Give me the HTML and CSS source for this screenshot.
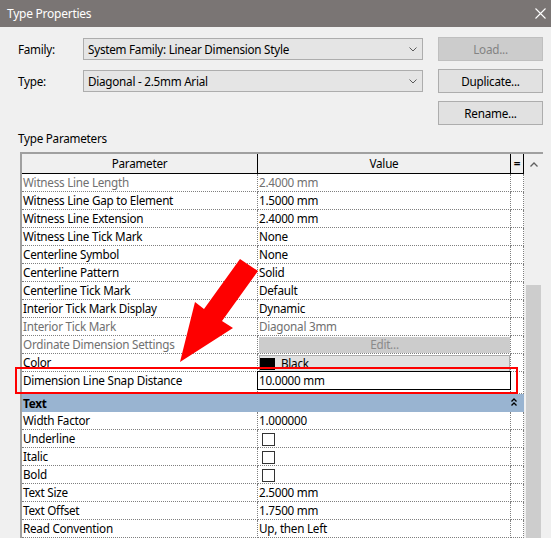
FILE: index.html
```html
<!DOCTYPE html>
<html>
<head>
<meta charset="utf-8">
<link rel="stylesheet" href="styles.css">
</head>
<body>
<div class="titlebar">
  <span class="title">Type Properties</span>
  <svg class="close" width="11" height="11" viewBox="0 0 11 11"><path d="M0.5 0.5 L10.5 10.5 M10.5 0.5 L0.5 10.5" stroke="#fff" stroke-width="1.1" fill="none"/></svg>
</div>

<div class="form">
  <span class="lbl">Family:</span>
  <div class="combo"><span>System Family: Linear Dimension Style</span><svg class="chev" width="8" height="5" viewBox="0 0 8 5"><polyline points="0.5,0.5 4,4 7.5,0.5" fill="none" stroke="#5a5a5a" stroke-width="1"/></svg></div>
  <div class="btn disabled">Load...</div>

  <span class="lbl">Type:</span>
  <div class="combo"><span>Diagonal - 2.5mm Arial</span><svg class="chev" width="8" height="5" viewBox="0 0 8 5"><polyline points="0.5,0.5 4,4 7.5,0.5" fill="none" stroke="#5a5a5a" stroke-width="1"/></svg></div>
  <div class="btn">Duplicate...</div>

  <div class="btn rename">Rename...</div>
</div>

<div class="section-label">Type Parameters</div>

<div class="frame">
  <div class="pgrid">
    <div class="c hd">Parameter</div>
    <div class="c hd">Value</div>
    <div class="c hd eqh">=</div>

    <div class="c gray">Witness Line Length</div><div class="c gray">2.4000 mm</div><div class="c"></div>
    <div class="c">Witness Line Gap to Element</div><div class="c">1.5000 mm</div><div class="c"></div>
    <div class="c">Witness Line Extension</div><div class="c">2.4000 mm</div><div class="c"></div>
    <div class="c">Witness Line Tick Mark</div><div class="c">None</div><div class="c"></div>
    <div class="c">Centerline Symbol</div><div class="c">None</div><div class="c"></div>
    <div class="c">Centerline Pattern</div><div class="c">Solid</div><div class="c"></div>
    <div class="c">Centerline Tick Mark</div><div class="c">Default</div><div class="c"></div>
    <div class="c">Interior Tick Mark Display</div><div class="c">Dynamic</div><div class="c"></div>
    <div class="c gray">Interior Tick Mark</div><div class="c gray">Diagonal 3mm</div><div class="c"></div>
    <div class="c gray">Ordinate Dimension Settings</div><div class="c"><div class="editbtn">Edit...</div></div><div class="c"></div>
    <div class="c">Color</div><div class="c"><div class="colorbtn"><span class="swatch"></span><span>Black</span></div></div><div class="c"></div>
    <div class="c tall">Dimension Line Snap Distance</div><div class="c tall"><div class="editbox">10.0000 mm</div></div><div class="c tall"></div>

    <div class="band"><span>Text</span><svg width="6" height="8" viewBox="0 0 6 8"><polyline points="0.5,3.5 3,1 5.5,3.5" fill="none" stroke="#000" stroke-width="1.3"/><polyline points="0.5,7.5 3,5 5.5,7.5" fill="none" stroke="#000" stroke-width="1.3"/></svg></div>

    <div class="c">Width Factor</div><div class="c">1.000000</div><div class="c"></div>
    <div class="c">Underline</div><div class="c"><span class="cb"></span></div><div class="c"></div>
    <div class="c">Italic</div><div class="c"><span class="cb"></span></div><div class="c"></div>
    <div class="c">Bold</div><div class="c"><span class="cb"></span></div><div class="c"></div>
    <div class="c">Text Size</div><div class="c">2.5000 mm</div><div class="c"></div>
    <div class="c">Text Offset</div><div class="c">1.7500 mm</div><div class="c"></div>
    <div class="c">Read Convention</div><div class="c">Up, then Left</div><div class="c"></div>
  </div>
  <div class="vscroll">
    <div class="sb-up"><svg width="8" height="5" viewBox="0 0 8 5"><polyline points="0.5,4.5 4,1 7.5,4.5" fill="none" stroke="#606060" stroke-width="1.3"/></svg></div>
    <div class="sb-track"><div class="sb-thumb"></div></div>
  </div>
</div>

<div class="annot-box"></div>
<svg class="annot-arrow" width="551" height="538" viewBox="0 0 551 538">
  <polygon points="240,259 258,271 222,321 233,328 180,362 195,302 204,309" fill="#fe0000"/>
</svg>
</body>
</html>
```

FILE: styles.css
```css
* { box-sizing: border-box; }
html, body {
  margin: 0;
  padding: 0;
}
body {
  width: 551px;
  height: 538px;
  overflow: hidden;
  position: relative;
  background: #f0f0f0;
  font-family: "Noto Sans", "DejaVu Sans", sans-serif;
  font-size: 11.7px;
  letter-spacing: -0.25px;
  color: #000;
}

.titlebar {
  height: 27px;
  background: #7a7574;
  color: #fff;
  display: flex;
  align-items: center;
  justify-content: space-between;
  padding: 0 5px 0 7px;
}
.title { font-size: 12px; }

.form {
  margin-top: 10px;
  padding-left: 18px;
  display: grid;
  grid-template-columns: 50px 340px 105px;
  grid-template-rows: 24px 24px 24px;
  column-gap: 15px;
  row-gap: 8px;
  align-items: center;
}
.lbl { line-height: 16px; }
.combo {
  height: 22px;
  border: 1px solid #adadad;
  background: #e5e5e5;
  display: flex;
  align-items: center;
  justify-content: space-between;
  padding: 0 5px 0 4px;
}
.btn {
  height: 24px;
  border: 1px solid #adadad;
  background: #e1e1e1;
  display: flex;
  align-items: center;
  justify-content: center;
}
.btn.disabled {
  background: #cccccc;
  border-color: #bfbfbf;
  color: #838383;
}
.rename { grid-column: 3; }

.section-label {
  margin-top: 6px;
  padding-left: 18px;
  line-height: 14px;
}

.frame {
  margin-top: 7px;
  margin-left: 20px;
  width: 523px;
  height: 386px;
  border-top: 2px solid #a0a0a0;
  border-left: 2px solid #a0a0a0;
  display: flex;
}
.pgrid {
  width: 502px;
  display: grid;
  grid-template-columns: 236px 253px 13px;
  align-content: start;
  background: #fff;
}
.c {
  height: 18px;
  line-height: 17px;
  padding-left: 1px;
  border-right: 1px dotted #7f7f7f;
  border-bottom: 1px dotted #7f7f7f;
  white-space: nowrap;
}
.c.tall { height: 22px; }
.c.gray { color: #707070; }
.hd {
  height: 20px;
  line-height: 19px;
  background: #f0f0f0;
  text-align: center;
  border-right: 1px solid #000;
  border-bottom: 1px solid #000;
  padding-left: 0;
}
.eqh { font-weight: bold; }

.editbtn {
  margin: 1px 0 0 0;
  width: 251px;
  height: 16px;
  line-height: 15px;
  background: #cccccc;
  color: #8a8a8a;
  text-align: center;
}
.colorbtn {
  margin-top: 1px;
  width: 251px;
  height: 17px;
  background: #e1e1e1;
  border: 1px solid #adadad;
  display: flex;
  align-items: center;
  line-height: 15px;
}
.swatch {
  width: 15px;
  height: 12px;
  background: #000;
  margin: 0 6px 0 0;
}
.editbox {
  margin: -1px 0 0 -2px;
  width: 254px;
  height: 19px;
  line-height: 17px;
  border: 1px solid #000;
  background: #fff;
  padding-left: 1px;
}
.cb {
  display: block;
  margin: 3px 0 0 3px;
  width: 13px;
  height: 13px;
  border: 1px solid #333;
  background: #fff;
}

.band {
  grid-column: 1 / -1;
  height: 18px;
  background: #99b4d1;
  font-weight: bold;
  display: flex;
  align-items: center;
  justify-content: space-between;
  padding: 0 7px 0 1px;
}
.band svg { margin-top: -3px; }

.vscroll {
  flex: 1;
  display: flex;
  flex-direction: column;
  background: #f0f0f0;
}
.sb-up {
  height: 20px;
  display: flex;
  align-items: center;
  justify-content: center;
  padding-left: 1px;
}
.sb-track {
  flex: 1;
  display: flex;
  flex-direction: column;
  padding: 111px 2px 0 2px;
}
.sb-thumb {
  flex: 1;
  background: #cdcdcd;
}

.annot-box {
  position: absolute;
  left: 15px;
  top: 367px;
  width: 503px;
  height: 27px;
  border: 2px solid #fe0000;
}
.annot-arrow {
  position: absolute;
  left: 0;
  top: 0;
  pointer-events: none;
}
```
